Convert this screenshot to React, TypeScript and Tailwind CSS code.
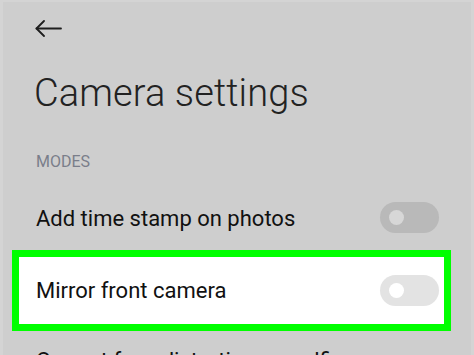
import React from "react";

function Toggle({ track, knob }: { track: string; knob: string }) {
  return (
    <div className={`w-[59px] h-[31px] shrink-0 rounded-full flex items-center pl-[9px] ${track}`}>
      <div className={`w-[15px] h-[15px] rounded-full ${knob}`} />
    </div>
  );
}

export default function App() {
  return (
    <div
      className="w-[474px] h-[355px] overflow-hidden bg-[#cecece] border-l-[3px] border-r-[3px] border-t-[2px] border-[#d4d4d4] flex flex-col"
      style={{ fontFamily: "Roboto, 'Noto Sans', sans-serif" }}
    >
      <div className="shrink-0 pl-[32px] pt-[18px] h-[34px]">
        <svg width="27" height="17" viewBox="0 0 27 17" fill="none" stroke="#1e1e1e" strokeWidth="1.8" strokeLinecap="round" strokeLinejoin="round">
          <path d="M1.5 8.5H26" />
          <path d="M9 1L1.5 8.5L9 16" />
        </svg>
      </div>
      <h1 className="shrink-0 mt-[38px] pl-[31px] text-[38px] leading-[38px] font-light text-[#222] tracking-[0.1px]">
        Camera settings
      </h1>
      <div className="shrink-0 mt-[42px] pl-[33px] text-[16px] leading-[16px] text-[#7a7e8a]">MODES</div>
      <div className="shrink-0 mt-[16px] h-[62px] pl-[33px] pr-[32px] flex items-center justify-between">
        <span className="text-[22px] leading-[22px] text-[#111] pt-[3px]">Add time stamp on photos</span>
        <Toggle track="bg-[#b9b9b9]" knob="bg-[#d7d7d7]" />
      </div>
      <div className="shrink-0 mt-[2px] ml-[9px] mr-[20px] h-[81px] border-[7px] border-[#00ff00] bg-white flex items-center justify-between pl-[17px] pr-[5px]">
        <span className="text-[22px] leading-[22px] text-[#111]">Mirror front camera</span>
        <Toggle track="bg-[#e3e3e3]" knob="bg-white" />
      </div>
      <div className="shrink-0 mt-[19px] pl-[33px] text-[22px] leading-[22px] text-[#111] whitespace-nowrap">
        Correct face distortion on selfies
      </div>
    </div>
  );
}
